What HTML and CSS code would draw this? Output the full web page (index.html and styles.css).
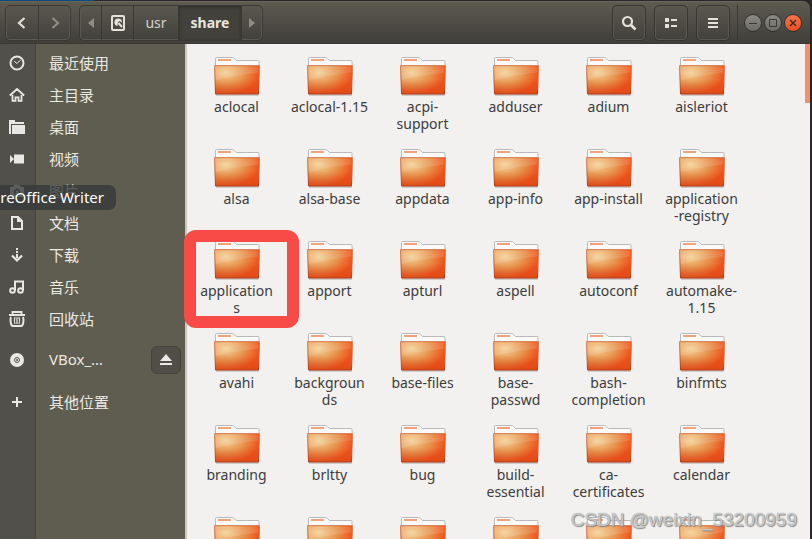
FILE: index.html
```html
<!DOCTYPE html>
<html lang="zh-CN">
<head>
  <meta charset="UTF-8" />
  <meta name="viewport" content="width=device-width, initial-scale=1.0" />
  <title>share</title>
  <link rel="stylesheet" href="styles.css">
</head>
<body>

  <svg class="defs" aria-hidden="true">
    <defs>
      <radialGradient id="front" cx="0.25" cy="0.25" r="0.85">
        <stop offset="0" stop-color="#f4d196" />
        <stop offset="0.5" stop-color="#e8914c" />
        <stop offset="0.9" stop-color="#f05018" />
      </radialGradient>
      <linearGradient id="shade" x1="0" y1="0" x2="0" y2="1">
        <stop offset="0.5" stop-color="#c8501c" stop-opacity="0" />
        <stop offset="1" stop-color="#c8401a" stop-opacity="0.4" />
      </linearGradient>
      <linearGradient id="edge" x1="0" y1="0" x2="0" y2="1">
        <stop offset="0" stop-color="#d9855c" />
        <stop offset="1" stop-color="#b43a12" />
      </linearGradient>
      <symbol id="folder" viewBox="0 0 48 48">
        <path d="M3 43h43" stroke="#000" stroke-opacity="0.15" stroke-width="2" />
        <path d="M2.500 16V6.500q0-1 1-1h16q1 0 2 1l2 2h21.500q1 0 1 1V16z" fill="#fafafa" stroke="#b9b9b9" />
        <path d="M5 7h13v2H5z" fill="#f0a37a" />
        <path d="M1.500 13.500h45l-1 28.500H2.500z" fill="url(#front)" />
        <path d="M1.500 13.500h45l-1 28.500H2.500z" fill="url(#shade)" stroke="url(#edge)" />
        <path d="M2.500 14.500h43l-.3 6Q24 23 2.800 28z" fill="#fff" fill-opacity="0.12" />
      </symbol>
    </defs>
  </svg>

  <div class="window">
    <header class="headerbar">
      <div class="group">
        <button class="nav" aria-label="后退"><svg width="16" height="16" viewBox="0 0 16 16"><path d="M10.500 3 5 8l5.500 5" fill="none" stroke="#e4e1d8" stroke-width="2.200" /></svg></button>
        <button class="nav" aria-label="前进"><svg width="16" height="16" viewBox="0 0 16 16"><path d="M5.500 3 11 8l-5.500 5" fill="none" stroke="#8f8c83" stroke-width="2.200" /></svg></button>
      </div>
      <div class="group path">
        <button class="arrow" aria-label="向左"><svg width="8" height="12" viewBox="0 0 8 12"><path d="M7 1v10L1 6z" fill="#8f8c83" /></svg></button>
        <button class="disk" aria-label="计算机"><svg width="16" height="18" viewBox="0 0 16 18"><rect x="2" y="2" width="12" height="14" rx="1" fill="none" stroke="#e4e1d8" stroke-width="2" /><path d="M7.500 12A3.800 3.800 0 1 1 12 8.500L9.500 7 8 8.500z" fill="#e4e1d8" /><path d="m8.500 9 3.500 4" stroke="#e4e1d8" stroke-width="2" /></svg></button>
        <button class="usr">usr</button>
        <button class="current">share</button>
        <button class="arrow" aria-label="向右"><svg width="8" height="12" viewBox="0 0 8 12"><path d="M1 1v10l6-5z" fill="#8f8c83" /></svg></button>
      </div>
      <div class="tools">
        <button class="tool" aria-label="搜索"><svg width="16" height="16" viewBox="0 0 16 16"><circle cx="6.500" cy="6.500" r="4.500" fill="none" stroke="#e4e1d8" stroke-width="2.200" /><path d="m10 10 4.500 4.500" stroke="#e4e1d8" stroke-width="2.600" /></svg></button>
        <button class="tool" aria-label="列表视图"><svg width="16" height="16" viewBox="0 0 16 16" fill="#e4e1d8"><path d="M2 3h4v4H2zM2 9h4v4H2zM8 4h6v2H8zM8 10h6v2H8z" /></svg></button>
        <button class="tool" aria-label="菜单"><svg width="16" height="16" viewBox="0 0 16 16" fill="#e4e1d8"><path d="M3 3h10v2H3zM3 7h10v2H3zM3 11h10v2H3z" /></svg></button>
      </div>
      <div class="controls">
        <button aria-label="最小化"><svg width="16" height="16" viewBox="0 0 16 16"><path d="M4 8.500h8" stroke="#3a3935" /></svg></button>
        <button aria-label="最大化"><svg width="16" height="16" viewBox="0 0 16 16"><path d="M4.500 4.500h7v7h-7z" fill="none" stroke="#3a3935" /></svg></button>
        <button class="close" aria-label="关闭"><svg width="16" height="16" viewBox="0 0 16 16"><path d="m5 5 6 6m0-6-6 6" stroke="#3a2a22" stroke-width="1.400" /></svg></button>
      </div>
    </header>

    <div class="main">
      <nav class="sidebar">
        <a href="#"><svg viewBox="0 0 16 16"><circle cx="8" cy="8" r="6.500" fill="none" stroke="#e8e8e6" stroke-width="2" /><path d="M5 6l3 2.500L11.500 5" fill="none" stroke="#e8e8e6" /></svg><span>最近使用</span></a>
        <a href="#"><svg viewBox="0 0 16 16"><path d="M.8 8.500 8 2l7.200 6.500M3.500 8v5.800h3v-3.500h3v3.500h3V8" fill="none" stroke="#e8e8e6" stroke-width="1.800" /></svg><span>主目录</span></a>
        <a href="#"><svg viewBox="0 0 16 16"><path d="M0 1h6v2h9v2H2v10H0z" fill="#e8e8e6" /><path d="M3 6h13v9H3z" fill="#e8e8e6" /></svg><span>桌面</span></a>
        <a href="#"><svg viewBox="0 0 16 16"><path d="M5 3.500h10v9H5zM1 4l4 4-4 4z" fill="#e8e8e6" /></svg><span>视频</span></a>
        <a href="#"><svg viewBox="0 0 16 16"><path fill-rule="evenodd" d="M1 4h3l1-2h6l1 2h3v10H1zM8 5.500a3.300 3.300 0 1 0 .01 0zM8 7.200a1.600 1.600 0 1 1-.01 0z" fill="#e8e8e6" /></svg><span>图片</span></a>
        <a href="#"><svg viewBox="0 0 16 16"><path d="M3 2h6l4 4v8H3z" fill="none" stroke="#e8e8e6" stroke-width="2" /><path d="M8 2v5h5z" fill="#e8e8e6" /></svg><span>文档</span></a>
        <a href="#"><svg viewBox="0 0 16 16"><path d="M7 1h2v2H7zM7 4h2v2H7zM7 7h2v4H7z" fill="#e8e8e6" /><path d="m3 8.500 5 5 5-5" fill="none" stroke="#e8e8e6" stroke-width="2.200" /></svg><span>下载</span></a>
        <a href="#"><svg viewBox="0 0 16 16" fill="none" stroke="#e8e8e6" stroke-width="2"><circle cx="3.500" cy="11.500" r="2.300" /><circle cx="11.500" cy="11.500" r="2.300" /><path d="M6 11.500V2.500h8v9" /></svg><span>音乐</span></a>
        <a href="#"><svg viewBox="0 0 16 16" fill="none" stroke="#e8e8e6"><path d="M0 4h16M3.500 3V1h9v2" stroke-width="1.800" /><path d="M2 6q-1 3 0 6.500Q2.500 15 4 15h8q1.500 0 2-2.500 1-3.500 0-6.500" stroke-width="2" /><path d="M6 6q-1.300 3.500 0 7M8 6v7M10 6q1.300 3.500 0 7" stroke-width="1.200" /></svg><span>回收站</span></a>
        <div class="device">
          <a href="#"><svg viewBox="0 0 16 16"><circle cx="8" cy="8" r="7" fill="#e8e8e6" /><circle cx="8" cy="8" r="2.500" fill="none" stroke="#55534a" /><circle cx="8" cy="8" r="1" fill="#55534a" /></svg><span>VBox_…</span></a>
          <button class="eject" aria-label="弹出"><svg width="14" height="14" viewBox="0 0 14 14"><path d="M7 1l6 7H1zM1 10h12v2H1z" fill="#e8e8e6" /></svg></button>
        </div>
        <a href="#"><svg viewBox="0 0 16 16"><path d="M3 8h10M8 3v10" stroke="#e8e8e6" stroke-width="2" /></svg><span>其他位置</span></a>
      </nav>

      <main class="files">
        <a href="#"><svg><use href="#folder" /></svg>aclocal</a>
        <a href="#"><svg><use href="#folder" /></svg>aclocal-1.15</a>
        <a href="#"><svg><use href="#folder" /></svg>acpi-<br>support</a>
        <a href="#"><svg><use href="#folder" /></svg>adduser</a>
        <a href="#"><svg><use href="#folder" /></svg>adium</a>
        <a href="#"><svg><use href="#folder" /></svg>aisleriot</a>

        <a href="#"><svg><use href="#folder" /></svg>alsa</a>
        <a href="#"><svg><use href="#folder" /></svg>alsa-base</a>
        <a href="#"><svg><use href="#folder" /></svg>appdata</a>
        <a href="#"><svg><use href="#folder" /></svg>app-info</a>
        <a href="#"><svg><use href="#folder" /></svg>app-install</a>
        <a href="#"><svg><use href="#folder" /></svg>application<br>-registry</a>

        <a href="#" class="marked"><svg><use href="#folder" /></svg>application<br>s</a>
        <a href="#"><svg><use href="#folder" /></svg>apport</a>
        <a href="#"><svg><use href="#folder" /></svg>apturl</a>
        <a href="#"><svg><use href="#folder" /></svg>aspell</a>
        <a href="#"><svg><use href="#folder" /></svg>autoconf</a>
        <a href="#"><svg><use href="#folder" /></svg>automake-<br>1.15</a>

        <a href="#"><svg><use href="#folder" /></svg>avahi</a>
        <a href="#"><svg><use href="#folder" /></svg>backgroun<br>ds</a>
        <a href="#"><svg><use href="#folder" /></svg>base-files</a>
        <a href="#"><svg><use href="#folder" /></svg>base-<br>passwd</a>
        <a href="#"><svg><use href="#folder" /></svg>bash-<br>completion</a>
        <a href="#"><svg><use href="#folder" /></svg>binfmts</a>

        <a href="#"><svg><use href="#folder" /></svg>branding</a>
        <a href="#"><svg><use href="#folder" /></svg>brltty</a>
        <a href="#"><svg><use href="#folder" /></svg>bug</a>
        <a href="#"><svg><use href="#folder" /></svg>build-<br>essential</a>
        <a href="#"><svg><use href="#folder" /></svg>ca-<br>certificates</a>
        <a href="#"><svg><use href="#folder" /></svg>calendar</a>

        <a href="#"><svg><use href="#folder" /></svg></a>
        <a href="#"><svg><use href="#folder" /></svg></a>
        <a href="#"><svg><use href="#folder" /></svg></a>
        <a href="#"><svg><use href="#folder" /></svg></a>
        <a href="#"><svg><use href="#folder" /></svg></a>
        <a href="#"><svg><use href="#folder" /></svg></a>
      </main>
      <div class="scrollbar"></div>
    </div>
  </div>

  <div class="tooltip">LibreOffice Writer</div>
  <div class="watermark">CSDN @weixin_53200959</div>

</body>
</html>
```

FILE: styles.css
```css
*, *::after {
  box-sizing: border-box;
}
body {
  margin: 0;
  height: 100vh;
  overflow: hidden;
  padding: 1px 2px 0 0;
  background: linear-gradient(to right, #0b4a7c 94px, #2b2629 94px);
  font-family: "Noto Sans", "Noto Sans CJK SC", sans-serif;
  font-size: 14px;
}
a {
  color: inherit;
  text-decoration: none;
}
button {
  display: flex;
  align-items: center;
  justify-content: center;
  padding: 0;
  border: none;
  background: none;
  color: #d5d2c8;
  font: inherit;
}
.defs {
  position: absolute;
  width: 0;
  height: 0;
}
.window {
  display: flex;
  flex-direction: column;
  height: 100%;
  border-radius: 0 7px 0 0;
  overflow: hidden;
}

/* header bar */
.headerbar {
  display: flex;
  align-items: center;
  flex: none;
  height: 43px;
  padding: 0 8px 0 5px;
  background: linear-gradient(#5d5a50, #4d4b44 55%, #403f3a);
  border-top: 1px solid #6a675d;
  border-bottom: 1px solid #3a3935;
}
.group {
  display: flex;
  height: 36px;
  margin-right: 8px;
  border: 1px solid #3a3935;
  border-radius: 5px;
  box-shadow: inset 0 0 0 1px #5c5950;
}
.group button + button {
  border-left: 1px solid #3a3935;
}
.nav {
  width: 32px;
}
.arrow {
  width: 21px;
}
.disk {
  width: 32px;
}
.usr {
  width: 45px;
}
.path .current {
  width: 63px;
  background: #42413b;
  box-shadow: inset 0 1px 3px #2e2d2a;
  color: #e9e6dd;
  font-weight: bold;
}
.tools {
  display: flex;
  gap: 8px;
  margin-left: auto;
  padding-right: 7px;
}
.tool {
  width: 34px;
  height: 36px;
  border: 1px solid #35342f;
  border-radius: 5px;
  box-shadow: inset 0 0 0 1px #5c5950;
}
.controls {
  display: flex;
  align-items: center;
  gap: 2px;
  height: 36px;
  padding-left: 6px;
  border-left: 1px solid #3a3935;
}
.controls button {
  width: 18px;
  height: 18px;
  border: 1px solid #33322e;
  border-radius: 50%;
  background: linear-gradient(#8c8a84, #6d6b66);
}
.controls .close {
  background: linear-gradient(#f8744b, #e9501f);
}

/* sidebar */
.main {
  display: flex;
  flex: 1;
  min-height: 0;
}
.sidebar {
  flex: none;
  width: 187px;
  padding-top: 3px;
  border-right: 2px solid #c9c7c3;
  background: linear-gradient(to right, #51504a 35px, #45443e 35px, #45443e 36px, #5f5d50 36px);
  color: #ebe9e2;
  font-size: 15px;
}
.sidebar a {
  display: flex;
  align-items: center;
  gap: 24px;
  height: 32px;
  padding-left: 9px;
}
.sidebar a svg {
  flex: none;
  width: 16px;
  height: 16px;
}
.sidebar span {
  padding-bottom: 2px;
}
.device {
  display: flex;
  align-items: center;
  justify-content: space-between;
  margin: 9px 0 10px;
  padding-right: 4px;
}
.eject {
  width: 30px;
  height: 28px;
  border: 1px solid #45443e;
  border-radius: 6px;
  background: #504e46;
}

/* folder view */
.files {
  display: grid;
  flex: 1;
  grid-template-columns: repeat(6, 1fr);
  grid-auto-rows: 92px;
  padding: 8px 62px 0 3px;
  background: #f2f1f0;
  color: #3c3c3c;
  line-height: 17px;
  text-align: center;
}
.files a {
  position: relative;
}
.files svg {
  display: block;
  width: 48px;
  height: 48px;
  margin: 0 auto -2px;
}
.marked::after {
  content: "";
  position: absolute;
  z-index: 1;
  inset: -6px -16px 0 -6px;
  border: 12px solid #f84a46;
  border-radius: 12px;
}
.scrollbar {
  flex: none;
  width: 5px;
  height: 59px;
  margin-left: -5px;
  background: #f28f6c;
}

/* floating over the window */
.tooltip {
  position: absolute;
  top: 185px;
  left: 0;
  display: flex;
  justify-content: flex-end;
  width: 116px;
  padding-right: 12px;
  border-radius: 0 7px 7px 0;
  overflow: hidden;
  background: rgba(54, 57, 58, 0.8);
  color: #fff;
  font-size: 15px;
  line-height: 25px;
  white-space: nowrap;
}
.watermark {
  position: absolute;
  right: 15px;
  bottom: 8px;
  color: rgba(225, 225, 225, 0.7);
  font-family: "Liberation Sans", sans-serif;
  font-size: 19px;
  line-height: 22px;
  text-shadow: 1px 1px 1px #888, 0 0 1px #888;
}
```
